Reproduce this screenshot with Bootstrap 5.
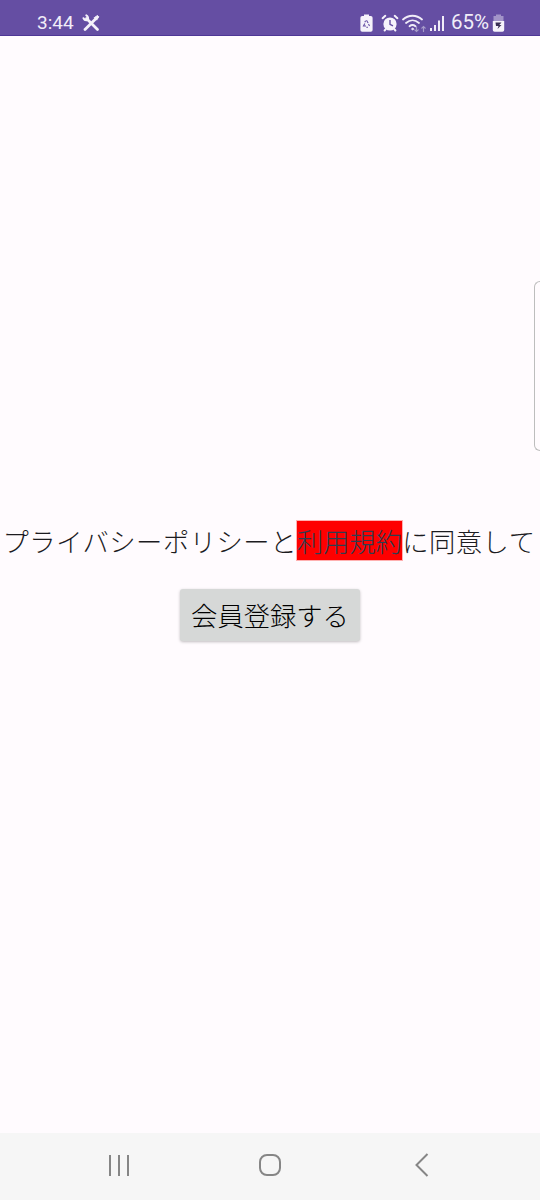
<!DOCTYPE html>
<html lang="ja">
<head>
<meta charset="utf-8">
<title>会員登録</title>
<link href="https://cdn.jsdelivr.net/npm/bootstrap@5.3.0/dist/css/bootstrap.min.css" rel="stylesheet">
<style>
html,body{height:100%;}
body{background:#fffbfe;font-family:"Roboto","Noto Sans CJK JP",sans-serif;overflow:hidden;}
.phone-shell{height:1200px;width:540px;position:relative;}
.status-strip{height:36px;background:#654ea3;border-bottom:1px solid #4f3796;color:#f1edf8;font-size:19px;line-height:1;padding:10px 35px 0 37px;flex:none;}
.status-strip svg{display:block;flex:none;}
.icon-gap{margin-left:3px;}
.pct-label{font-size:20.5px;margin-left:6px;margin-right:3px;}
.page-body{flex:1 1 auto;padding-top:486px;}
.consent-line{font-family:"Noto Sans CJK JP",sans-serif;font-weight:300;font-size:26.3px;letter-spacing:.52px;line-height:38px;color:#1c1b1f;white-space:nowrap;margin:0 0 29px;padding-right:2px;text-align:center;}
.terms-mark{background:#fe0000;color:#2c3e50;outline:1px solid #ffb0b0;letter-spacing:0;}
.signup-btn{font-family:"Noto Sans CJK JP",sans-serif;font-weight:300;background:#d6d8d7;color:#000;border:0;border-radius:3px;width:180px;height:52px;padding:0;font-size:26.3px;line-height:52px;box-shadow:0 1px 3px rgba(0,0,0,.25);}
.signup-btn:hover{background:#d6d8d7;color:#000;}
.nav-strip{height:67px;background:#f6f6f6;flex:none;padding-bottom:4px;gap:127.5px;}
.edge-handle{position:absolute;right:0;top:281px;width:6px;height:170px;border:1.5px solid #bdbdbd;border-right:0;border-radius:6px 0 0 6px;}
</style>
</head>
<body>
<div class="phone-shell d-flex flex-column">
  <div class="status-strip d-flex align-items-center">
    <span>3:44</span>
    <svg class="ms-2" width="18" height="18" viewBox="0 0 18 18" fill="none" stroke="#f4f1fa" stroke-linecap="round">
      <path d="M4.500 4.500 15.500 15.500" stroke-width="2.800"/>
      <path d="M14 4.500 3 15.500" stroke-width="2.800"/>
      <path d="M1.500 4.200A3.300 3.300 0 0 0 5.800 5.800 3.300 3.300 0 0 0 4.300 1.400" stroke-width="2"/>
      <path d="M12.500 3.500 15.500 1.500 16.800 2.800 14.800 5.800z" fill="#f4f1fa" stroke-width="1"/>
    </svg>
    <div class="ms-auto d-flex align-items-center">
      <svg width="13" height="18" viewBox="0 0 13 18"><path d="M4 .5h5v1.500h1.800a1.800 1.800 0 0 1 1.800 1.800V16a1.800 1.800 0 0 1-1.800 1.800H2.200A1.800 1.800 0 0 1 .4 16V3.800A1.800 1.800 0 0 1 2.200 2H4z" fill="#f6f3fb"/><path d="M6.500 6.300l1.600 2.700M4.800 9.500 3.500 12h2.500M9.500 12 8.500 10M8 13.200H6.300M5.600 6.800 4.800 8.200" fill="none" stroke="#654ea3" stroke-width="1.100"/></svg>
      <svg class="ms-2" width="18" height="18" viewBox="0 0 18 18" fill="none"><circle cx="9" cy="10" r="6.600" fill="#f6f3fb"/><path d="M9 6v4.300l3 1.500" stroke="#654ea3" stroke-width="1.400"/><path d="M1.600 4.200 4.300 1.800M16.400 4.200l-2.700-2.400M3.600 16.500l1.200-1.400M14.400 16.500l-1.200-1.400" stroke="#f6f3fb" stroke-width="2" stroke-linecap="round"/></svg>
      <svg class="icon-gap" width="25" height="20" viewBox="0 0 25 20" fill="none" stroke="#f1edf8" stroke-linecap="round"><path d="M1 6.500C6.500 1.500 14.500 1.500 20 6.500" stroke-width="1.800"/><path d="M4 10c4-3.500 9-3.500 13 0" stroke-width="1.800"/><path d="M7.500 13.200c2-1.600 4-1.600 6 0" stroke-width="1.800"/><circle cx="10.500" cy="16" r=".8" fill="#f1edf8"/><path d="M14.500 13.500v5M12.800 16.800l1.700 1.700 1.700-1.700" stroke="#a79bc9" stroke-width="1.200"/><path d="M21.500 18.500v-5M19.800 15.200l1.700-1.700 1.700 1.700" stroke="#a79bc9" stroke-width="1.200"/></svg>
      <svg class="icon-gap" width="15" height="18" viewBox="0 0 15 18" fill="#f1edf8"><rect x="0" y="14" width="2" height="3"/><rect x="4" y="11" width="2" height="6"/><rect x="8" y="6.500" width="2" height="10.500"/><rect x="12" y="2" width="2" height="15"/></svg>
      <span class="pct-label">65%</span>
      <svg width="13" height="18" viewBox="0 0 13 18"><path d="M4 .5h5V2h-5z" fill="#a294c8"/><path d="M1.500 2h10v5h-10z" fill="#a294c8"/><path d="M.8 7h11.400v9a1.800 1.800 0 0 1-1.800 1.800H2.600A1.800 1.800 0 0 1 .8 16z" fill="#f6f3fb"/><path d="M3.500 8.500h6l-2.200 2.500H9.500l-4 4 1-3H4z" fill="#3a2f55"/></svg>
    </div>
  </div>
  <main class="page-body text-center">
    <p class="consent-line">プライバシーポリシーと<span class="terms-mark">利用規約</span>に同意して</p>
    <button type="button" class="btn signup-btn">会員登録する</button>
  </main>
  <div class="edge-handle"></div>
  <div class="nav-strip d-flex align-items-center justify-content-center">
    <svg width="24" height="24" viewBox="0 0 24 24" fill="none" stroke="#868686" stroke-width="2"><path d="M3 2v21M12 2v21M21 2v21"/></svg>
    <svg width="24" height="24" viewBox="0 0 24 24" fill="none" stroke="#868686" stroke-width="2"><rect x="2" y="2" width="20" height="20" rx="7"/></svg>
    <svg width="24" height="24" viewBox="0 0 24 24" fill="none" stroke="#868686" stroke-width="2"><path d="M17.500 1 6.500 12 17.500 23"/></svg>
  </div>
</div>
<script src="https://cdn.jsdelivr.net/npm/bootstrap@5.3.0/dist/js/bootstrap.bundle.min.js"></script>
</body>
</html>
